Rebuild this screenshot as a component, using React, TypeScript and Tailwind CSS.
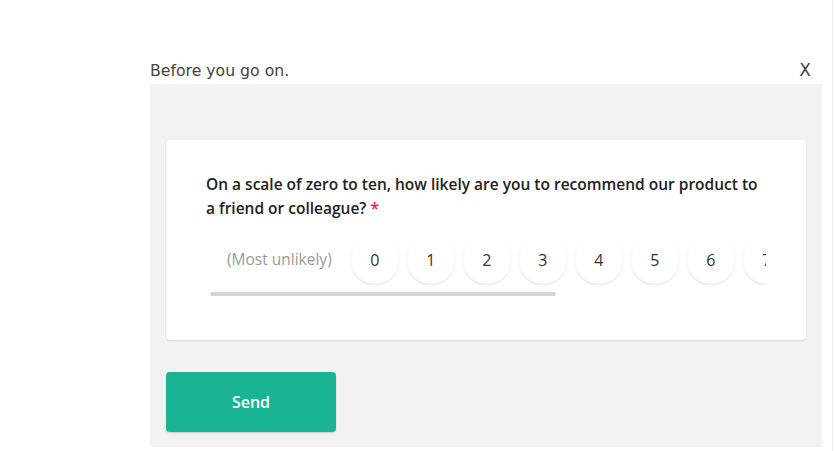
export default function App() {
  const scores = [0, 1, 2, 3, 4, 5, 6, 7, 8, 9, 10];

  return (
    <div className="relative h-[451px] w-[835px] overflow-hidden bg-white">
      {/* page scrollbar edge */}
      <div className="absolute right-[2px] top-0 h-full w-px bg-[#ececec]" />

      <div className="ml-[150px] w-[672px] pt-[58px]">
        <div className="flex h-[26px] items-center justify-between font-['DejaVu_Sans',sans-serif] text-[15.7px] text-[#444]">
          <span>Before you go on.</span>
          <span className="mr-[11px] text-[17px]">X</span>
        </div>

        <div className="h-[363px] bg-[#f2f2f2] px-4 pt-[56px] font-['Open_Sans',sans-serif]">
          <div className="h-[200px] rounded bg-white px-10 pt-[32px] shadow-[0_1px_2px_rgba(0,0,0,0.12)]">
            <p className="w-[560px] text-[15.5px] font-semibold leading-6 text-[#222]">
              On a scale of zero to ten, how likely are you to recommend our product to a friend or colleague?{' '}
              <span className="text-[#e2214f]">*</span>
            </p>

            <div className="mt-[16px] w-[560px] overflow-hidden">
              <div className="flex w-max items-center pb-px">
                <span className="ml-[21px] mr-[19px] text-[15.5px] text-[#9a9a9a]">(Most unlikely)</span>
                <div className="flex gap-2">
                  {scores.map(n => (
                    <div
                      key={n}
                      className="flex h-12 w-12 items-center justify-center rounded-full bg-white text-[16px] text-[#333] shadow-[0_1px_2px_rgba(0,0,0,0.12)]"
                    >
                      {n}
                    </div>
                  ))}
                </div>
                <span className="ml-[18px] mr-[21px] text-[15.5px] text-[#9a9a9a]">(Most likely)</span>
              </div>
            </div>
            <div className="ml-[4px] mt-[7px] h-[4px] w-[346px] rounded-full bg-[#d4d4d4]" />
          </div>

          <button className="mt-8 h-[60px] w-[170px] rounded bg-[#1ab394] text-[16px] font-semibold text-white shadow-[0_1px_2px_rgba(0,0,0,0.15)]">
            Send
          </button>
        </div>
      </div>
    </div>
  );
}
